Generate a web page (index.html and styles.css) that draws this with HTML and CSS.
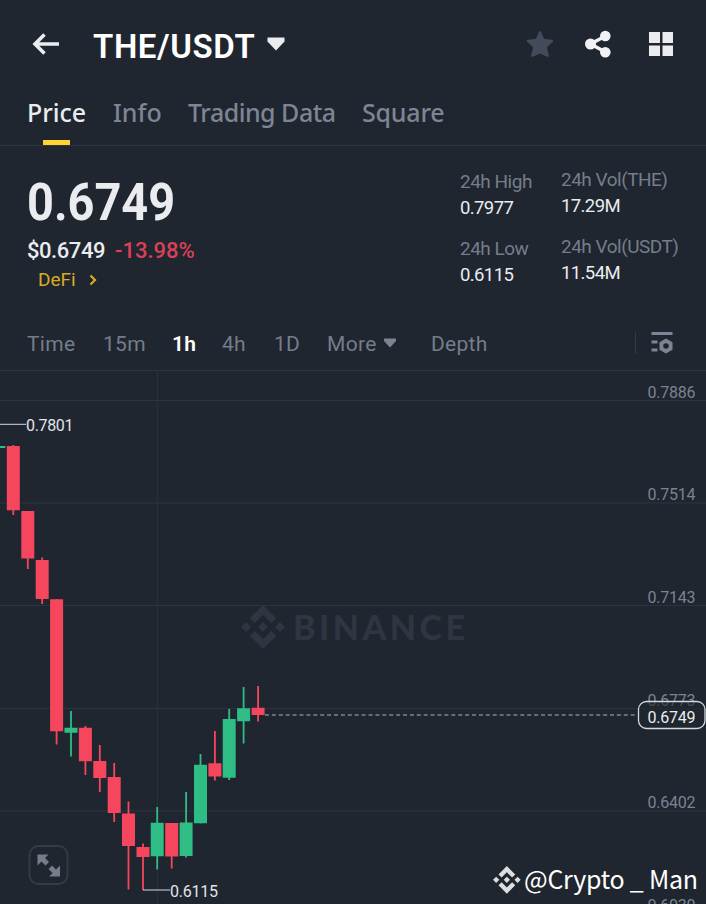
FILE: index.html
```
<!DOCTYPE html>
<html lang="en">
<head>
  <meta charset="UTF-8" />
  <meta name="viewport" content="width=device-width, initial-scale=1.0" />
  <title>THE/USDT</title>
  <link rel="stylesheet" href="styles.css">
</head>
<body>

  <header class="topbar">
    <svg class="back" width="28" height="22" viewBox="0 0 28 22">
      <path d="M12.5 1.5L3 11l9.500 9.500M3 11h24" fill="none" stroke="#eaecef" stroke-width="3.600"/>
    </svg>
    <h1 class="pair">THE/USDT</h1>
    <svg class="pair-arrow" width="18" height="14" viewBox="0 0 18 14">
      <path d="M.5.500h17v4L9 13.500.500 4.500z" fill="#eaecef"/>
    </svg>
    <div class="actions">
      <svg width="28" height="28" viewBox="0 0 28 28">
        <path d="M14 2.500l3.200 7.600 8.800.800-6.600 5.800 2.200 9L14 22.200l-7.600 3.500 2.200-9L2 10.900l8.800-.800z" fill="#434c5a" stroke="#434c5a" stroke-width="2.500" stroke-linejoin="round"/>
      </svg>
      <svg class="share" width="28" height="28" viewBox="0 0 28 28">
        <path d="M21.500 6L6.500 14l15 8" fill="none" stroke="#f0f1f5" stroke-width="3.500"/>
        <circle cx="21.300" cy="6" r="5.300" fill="#f0f1f5"/>
        <circle cx="6.500" cy="14" r="5.500" fill="#f0f1f5"/>
        <circle cx="21.300" cy="22.300" r="5.300" fill="#f0f1f5"/>
      </svg>
      <svg width="26" height="26" viewBox="0 0 26 26">
        <path d="M1 1h11v11H1zM14.500 1h10.500v11H14.500zM1 14.500h11V25H1zM14.500 14.500h10.500V25H14.500z" fill="#eaecef"/>
      </svg>
    </div>
  </header>

  <nav class="tabs">
    <a class="tab tab-price active">Price</a>
    <a class="tab tab-info">Info</a>
    <a class="tab tab-data">Trading Data</a>
    <a class="tab tab-square">Square</a>
  </nav>

  <section class="summary">
    <div class="quote">
      <div class="last-price">0.6749</div>
      <div class="fiat"><span class="usd">$0.6749</span><span class="change">-13.98%</span></div>
      <div class="tag">
        <span>DeFi</span>
        <svg width="8" height="12" viewBox="0 0 8 12"><path d="M1.500 1.500L6 6l-4.500 4.500" fill="none" stroke="#d9ab25" stroke-width="2.200"/></svg>
      </div>
    </div>
    <div class="stats stats-price">
      <div class="stat"><span class="label">24h High</span><span class="value">0.7977</span></div>
      <div class="stat"><span class="label">24h Low</span><span class="value">0.6115</span></div>
    </div>
    <div class="stats stats-volume">
      <div class="stat"><span class="label">24h Vol(THE)</span><span class="value">17.29M</span></div>
      <div class="stat"><span class="label">24h Vol(USDT)</span><span class="value">11.54M</span></div>
    </div>
  </section>

  <div class="intervals">
    <span class="int-time">Time</span>
    <span class="int-15m">15m</span>
    <span class="int-1h active">1h</span>
    <span class="int-4h">4h</span>
    <span class="int-1d">1D</span>
    <span class="int-more">More</span>
    <svg class="more-arrow" width="14" height="10" viewBox="0 0 14 10"><path d="M1 .500h12v2.500L7 9.500 1 3z" fill="#7d8595"/></svg>
    <span class="int-depth">Depth</span>
    <svg class="settings" width="22" height="22" viewBox="0 0 22 22">
      <path d="M.5 0h21v3H.5zM.5 8.500h6v3h-6zM.5 16.500h6v3h-6z" fill="#7d8595"/>
      <path d="M15 6.500l6.500 3.700v7.600L15 21.500l-6.500-3.700v-7.600zM15 11.200a2.800 2.800 0 1 0 0 5.600 2.800 2.800 0 0 0 0-5.600z" fill="#7d8595" fill-rule="evenodd"/>
    </svg>
  </div>

  <main class="chart">
    <svg width="706" height="534" viewBox="0 370 706 534">
      <defs>
        <!-- 44x44 diamond mark -->
        <g id="mark">
          <path d="M22 0L35.300 13.300 30.300 18.300 22 10 13.700 18.300 8.700 13.300z"/>
          <path d="M22 44L35.300 30.700 30.300 25.700 22 34 13.700 25.700 8.700 30.700z"/>
          <path d="M22 17l5 5-5 5-5-5zM5 17l5 5-5 5-5-5zM39 17l5 5-5 5-5-5z"/>
        </g>
      </defs>

      <path class="grid" d="M0 370.500H706M0 400.500H706M0 503H706M0 605.500H706M0 708.500H706M0 811H706M157.300 370V904"/>

      <g class="watermark">
        <use href="#mark" x="241" y="605"/>
        <text x="293" y="640" textLength="172">BINANCE</text>
      </g>

      <g class="axis">
        <text x="647.500" y="397.500" textLength="48">0.7886</text>
        <text x="647.500" y="500" textLength="48">0.7514</text>
        <text x="647.500" y="603" textLength="48">0.7143</text>
        <text x="647.500" y="705.500" textLength="48">0.6773</text>
        <text x="647.500" y="808" textLength="48">0.6402</text>
        <text x="647.500" y="911" textLength="48">0.6030</text>
      </g>

      <g id="candles"></g>

      <path class="leader" d="M0 424.300H26M143 890H170"/>
      <text class="extreme" x="26" y="431" textLength="47.500">0.7801</text>
      <text class="extreme" x="170" y="896.500" textLength="48">0.6115</text>

      <path class="last-line" d="M265 715H637"/>
      <rect class="last-box" x="638.500" y="701.500" width="66.500" height="27" rx="8"/>
      <text class="last-text" x="647.500" y="723" textLength="48">0.6749</text>

      <rect class="expand-box" x="29.500" y="846" width="38" height="38" rx="9"/>
      <path class="expand" d="M37.500 854.500h11l-3.500 3.500 4 4-3.500 3.500-4-4-4 4zM60 876.500h-11l3.500-3.500-4-4 3.500-3.500 4 4 4-4z"/>

      <g class="signature">
        <use href="#mark" transform="translate(493 866) scale(.63)"/>
        <text x="524" y="889" textLength="174">@Crypto _ Man</text>
      </g>
    </svg>
  </main>

  <script>
    // [center x, high, body top, body bottom, low, rising]
    const candles = [
      [-1.2, 446, 446, 448, 448, 1],
      [13.3, 445, 446, 510.3, 515, 0],
      [27.8, 511, 511, 558.5, 569, 0],
      [42.2, 557.5, 560, 599, 604, 0],
      [56.6, 599, 599.3, 731.3, 744.5, 0],
      [71, 711, 727.7, 732.7, 756.5, 1],
      [85.4, 726, 727.7, 761.2, 775, 0],
      [99.8, 745, 761, 778, 792, 0],
      [114.2, 763, 777, 813, 822, 0],
      [128.5, 801.5, 813.5, 846, 889.5, 0],
      [143, 843.5, 847, 857, 890, 0],
      [157.2, 807, 822.7, 856.3, 869.5, 1],
      [171.7, 823, 823, 856.5, 868.5, 0],
      [186.1, 792, 822.5, 856, 857.5, 1],
      [200.5, 754, 764.7, 823.2, 823.5, 1],
      [214.9, 731, 763.3, 776.5, 780.5, 0],
      [229.2, 709, 719, 777.7, 780, 1],
      [243.6, 687, 708.2, 721.2, 743.5, 1],
      [258.1, 686, 707.8, 715, 721.5, 0]
    ];
    const group = document.getElementById('candles');
    const ns = 'http://www.w3.org/2000/svg';

    candles.forEach(([x, high, top, bottom, low, up]) => {
      const path = document.createElementNS(ns, 'path');
      path.setAttribute('class', up ? 'up' : 'down');
      path.setAttribute('d', `M${x - 6.5} ${top}h13V${bottom}h-13zM${x - 0.9} ${high}h1.8V${low}h-1.8z`);
      group.appendChild(path);
    });
  </script>
</body>
</html>
```
FILE: styles.css
```
body {
  margin: 0;
  width: 706px;
  height: 904px;
  overflow: hidden;
  background: #1f262f;
  color: #eaecef;
  font-family: Roboto, "Liberation Sans", sans-serif;
  white-space: nowrap;
}

svg {
  display: block;
  flex-shrink: 0;
}

.topbar {
  display: flex;
  align-items: center;
  height: 88px;
  padding: 0 32px;
}

.pair {
  width: 162px;
  margin: 4px 12px 0 33px;
  font-size: 33px;
  font-weight: 600;
  letter-spacing: 0.6px;
  color: #fff;
}

.actions {
  display: flex;
  align-items: center;
  gap: 30px;
  margin-left: auto;
}

.share {
  margin-right: 6px;
}

.tabs {
  display: flex;
  box-sizing: border-box;
  height: 58px;
  padding-left: 27px;
  border-bottom: 1px solid #2d3540;
  font: 500 25px/48px "Noto Sans", sans-serif;
  color: #7d8595;
}

.tab {
  position: relative;
  box-sizing: border-box;
}

.tab-price {
  width: 86px;
}

.tab-info {
  width: 75px;
}

.tab-data {
  width: 174px;
  letter-spacing: -0.5px;
}

.tab-square {
  letter-spacing: -0.2px;
}

.tab.active {
  color: #eaecef;
}

.tab.active::after {
  content: "";
  position: absolute;
  left: 16px;
  bottom: 0;
  width: 27px;
  height: 5px;
  background: #fcd535;
}

.summary {
  display: flex;
  height: 170px;
}

.quote {
  width: 433px;
  padding-left: 27px;
}

/* condensed a little so the digits look like DIN */
.last-price {
  margin-top: 26px;
  height: 60px;
  font-size: 51px;
  font-weight: 700;
  line-height: 61px;
  transform: scaleX(0.92);
  transform-origin: left;
}

.fiat {
  display: flex;
  gap: 10px;
  margin-top: 6px;
  font-size: 22px;
  font-weight: 500;
  line-height: 26px;
}

.usd {
  letter-spacing: -0.45px;
}

.change {
  color: #dc4059;
}

.tag {
  display: flex;
  align-items: center;
  gap: 13px;
  margin: 4px 0 0 11px;
  font-size: 19px;
  line-height: 24px;
  color: #d9ab25;
}

.stats {
  display: flex;
  flex-direction: column;
  gap: 15px;
  padding-top: 23px;
}

.stats-price {
  width: 101px;
}

.stats-volume {
  padding-top: 21px;
}

.stat {
  display: flex;
  flex-direction: column;
  line-height: 26px;
}

.label {
  font-size: 19px;
  letter-spacing: -0.5px;
  color: #757d8c;
}

.value {
  font-size: 18.5px;
  letter-spacing: -0.6px;
}

.intervals {
  display: flex;
  align-items: center;
  height: 54px;
  padding-left: 27px;
  font-size: 21px;
  letter-spacing: 0.3px;
  color: #757d8c;
}

.intervals span {
  padding-top: 2px;
}

.intervals .active {
  color: #fff;
  font-weight: 600;
}

.int-time { width: 76px; }
.int-15m { width: 69px; }
.int-1h { width: 50px; }
.int-4h { width: 52px; }
.int-1d { width: 53px; }
.int-more { width: 56px; }
.int-depth { margin-left: 34px; }

.settings {
  margin-left: auto;
  margin-right: 33px;
  padding-left: 15px;
  border-left: 1px solid #343c48;
}

.grid {
  fill: none;
  stroke: #2c343f;
}

.watermark {
  fill: #2f3541;
  font: 900 34px Lato, sans-serif;
}

.axis {
  fill: #7b8392;
  font-size: 16px;
}

.up {
  fill: #2ebd85;
}

.down {
  fill: #f6465d;
}

.leader {
  stroke: #d5d9df;
}

.extreme {
  fill: #e1e4e9;
  font-size: 16px;
}

.last-line {
  stroke: #aeb4bf;
  stroke-width: 1.2;
  stroke-dasharray: 4 2.9;
}

.last-box {
  fill: #1f262f;
  fill-opacity: 0.6;
  stroke: #d5d9df;
  stroke-width: 1.3;
}

.last-text {
  fill: #eaecef;
  font-size: 16px;
}

.expand-box {
  fill: none;
  stroke: #343c48;
  stroke-width: 1.8;
}

.expand {
  fill: #757d8c;
}

.signature {
  fill: #fff;
  font: 25px "Noto Sans CJK SC", sans-serif;
}

.signature use {
  fill: #dcdddf;
}
```
